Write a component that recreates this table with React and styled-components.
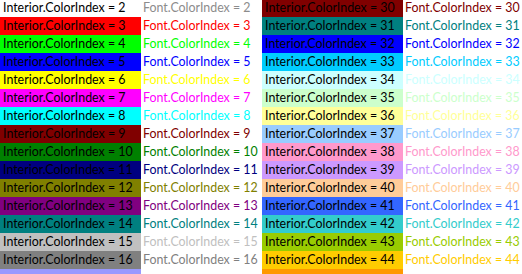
import React from 'react';
import styled, { createGlobalStyle } from 'styled-components';

const GlobalStyle = createGlobalStyle`
  html, body {
    margin: 0;
    padding: 0;
    background: #ffffff;
    overflow: hidden;
  }
`;

// Excel default 56-colour palette (the part shown)
const palette = {
  2: '#FFFFFF', 3: '#FF0000', 4: '#00FF00', 5: '#0000FF', 6: '#FFFF00',
  7: '#FF00FF', 8: '#00FFFF', 9: '#800000', 10: '#008000', 11: '#000080',
  12: '#808000', 13: '#800080', 14: '#008080', 15: '#C0C0C0', 16: '#808080',
  17: '#9999FF',
  30: '#800000', 31: '#008080', 32: '#0000FF', 33: '#00CCFF', 34: '#CCFFFF',
  35: '#CCFFCC', 36: '#FFFF99', 37: '#99CCFF', 38: '#FF99CC', 39: '#CC99FF',
  40: '#FFCC99', 41: '#3366FF', 42: '#33CCCC', 43: '#99CC00', 44: '#FFCC00',
  45: '#FF9900',
};

const Sheet = styled.div`
  display: grid;
  grid-template-columns: 141px 121px 141px 119px;
  grid-auto-rows: 18px;
  margin-top: -1px;
  width: 522px;
  height: 275px;
  overflow: hidden;
  font-family: Lato, "Liberation Sans", sans-serif;
  font-size: 12.4px;
  color: #000000;
`;

const Cell = styled.div`
  padding-left: 3px;
  box-sizing: border-box;
  white-space: nowrap;
  line-height: 18px;
`;

const InteriorCell = styled(Cell)`
  background: ${p => p.$bg};
`;

const FontCell = styled(Cell)`
  padding-left: 2px;
  color: ${p => p.$fg};
`;

// the 16th row is cut by the window edge: only its fill shows
const left = Array.from({ length: 16 }, (_, i) => i + 2);
const right = Array.from({ length: 16 }, (_, i) => i + 30);

export default function App() {
  return (
    <React.Fragment>
      <GlobalStyle />
      <Sheet>
        {left.map((n, i) => {
          const m = right[i];
          const cut = i === left.length - 1;
          return (
            <React.Fragment key={n}>
              <InteriorCell $bg={palette[n]}>{!cut && `Interior.ColorIndex = ${n}`}</InteriorCell>
              <FontCell $fg={n === 2 ? '#8C8C8C' : palette[n]}>{!cut && `Font.ColorIndex = ${n}`}</FontCell>
              <InteriorCell $bg={palette[m]}>{!cut && `Interior.ColorIndex = ${m}`}</InteriorCell>
              <FontCell $fg={palette[m]}>{!cut && `Font.ColorIndex = ${m}`}</FontCell>
            </React.Fragment>
          );
        })}
      </Sheet>
    </React.Fragment>
  );
}
